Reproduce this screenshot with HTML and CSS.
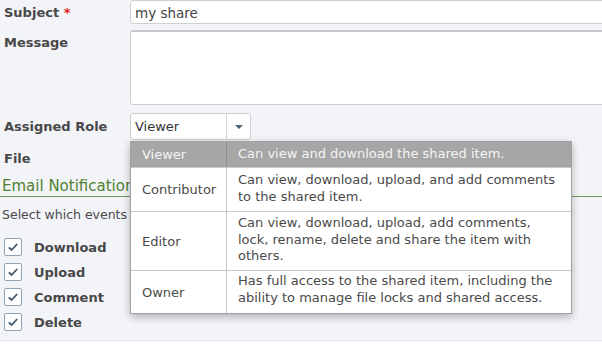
FILE: index.html
```html
<!DOCTYPE html>
<html>
<head>
<meta charset="utf-8">
<link rel="stylesheet" href="styles.css">
</head>
<body>
<div class="page">
  <div class="form">
    <div class="row row-subject">
      <div class="label">Subject <span class="req">*</span></div>
      <div class="input">my share</div>
    </div>
    <div class="row row-message">
      <div class="label">Message</div>
      <div class="textarea"></div>
    </div>
    <div class="row row-role">
      <div class="label">Assigned Role</div>
      <div class="select-wrap">
        <div class="select">
          <span class="select-value">Viewer</span>
          <span class="select-btn"><span class="caret"></span></span>
        </div>
        <div class="popup">
          <div class="prow head">
            <div class="pname">Viewer</div>
            <div class="pdesc">Can view and download the shared item.</div>
          </div>
          <div class="prow r-contrib">
            <div class="pname">Contributor</div>
            <div class="pdesc">Can view, download, upload, and add comments<br>to the shared item.</div>
          </div>
          <div class="prow r-editor">
            <div class="pname">Editor</div>
            <div class="pdesc">Can view, download, upload, add comments,<br>lock, rename, delete and share the item with<br>others.</div>
          </div>
          <div class="prow r-owner">
            <div class="pname">Owner</div>
            <div class="pdesc">Has full access to the shared item, including the<br>ability to manage file locks and shared access.</div>
          </div>
        </div>
      </div>
    </div>
    <div class="row row-file">
      <div class="label">File</div>
    </div>
    <div class="section-title">Email Notification</div>
    <div class="hint">Select which events</div>
    <div class="checks">
      <div class="check"><span class="box"><svg viewBox="0 0 18 18" width="18" height="18"><path d="M4.8 9.3 L7.6 12 L13.2 6" fill="none" stroke="#3d566c" stroke-width="1.8"/></svg></span><span class="clabel">Download</span></div>
      <div class="check"><span class="box"><svg viewBox="0 0 18 18" width="18" height="18"><path d="M4.8 9.3 L7.6 12 L13.2 6" fill="none" stroke="#3d566c" stroke-width="1.8"/></svg></span><span class="clabel">Upload</span></div>
      <div class="check"><span class="box"><svg viewBox="0 0 18 18" width="18" height="18"><path d="M4.8 9.3 L7.6 12 L13.2 6" fill="none" stroke="#3d566c" stroke-width="1.8"/></svg></span><span class="clabel">Comment</span></div>
      <div class="check"><span class="box"><svg viewBox="0 0 18 18" width="18" height="18"><path d="M4.8 9.3 L7.6 12 L13.2 6" fill="none" stroke="#3d566c" stroke-width="1.8"/></svg></span><span class="clabel">Delete</span></div>
    </div>
  </div>
  <div class="footer"></div>
</div>
</body>
</html>
```
FILE: styles.css
```css
html, body {
  margin: 0;
  padding: 0;
  background: #ffffff;
}
body {
  font-family: "DejaVu Sans", Verdana, sans-serif;
  color: #4a4a4a;
  width: 602px;
  height: 357px;
  overflow: hidden;
}
.page {
  display: flex;
  flex-direction: column;
}
.form {
  background: #f3f4f8;
  height: 340px;
  border-bottom: 1px solid #e2e3e8;
  display: flex;
  flex-direction: column;
}
.row {
  display: flex;
  align-items: flex-start;
}
.label {
  width: 126px;
  padding-left: 4px;
  font-weight: bold;
  font-size: 13px;
  color: #484848;
  flex-shrink: 0;
}
.req {
  color: #e02020;
}
.row-subject {
  height: 25px;
}
.row-subject .label {
  padding-top: 5px;
}
.input {
  flex: 1;
  height: 24px;
  margin-right: -10px;
  background: #fff;
  border: 1px solid #cfcfcf;
  border-radius: 3px;
  font-size: 13.5px;
  line-height: 24px;
  padding-left: 4px;
  color: #444;
  box-sizing: border-box;
}
.row-message {
  margin-top: 5px;
  height: 75px;
}
.row-message .label {
  padding-top: 5px;
}
.textarea {
  flex: 1;
  height: 75px;
  margin-right: -10px;
  background: #fff;
  border: 1px solid #cfcfcf;
  border-top: 2px solid #c6c6c6;
  border-radius: 3px;
  box-sizing: border-box;
}
.row-role {
  margin-top: 8px;
  height: 27px;
}
.row-role .label {
  padding-top: 6px;
}
.select-wrap {
  position: relative;
}
.select {
  width: 121px;
  height: 27px;
  display: flex;
  background: #fff;
  border: 1px solid #cfcfcf;
  border-radius: 3px;
  box-sizing: border-box;
}
.select-value {
  width: 91px;
  border-right: 1px solid #d6d6d6;
  font-size: 13px;
  line-height: 25px;
  padding-left: 4px;
  color: #333;
}
.select-btn {
  flex: 1;
  display: flex;
  align-items: center;
  justify-content: center;
}
.caret {
  width: 0;
  height: 0;
  border-left: 4px solid transparent;
  border-right: 4px solid transparent;
  border-top: 4px solid #4b6173;
}
.popup {
  position: absolute;
  left: 0;
  top: 28px;
  width: 440px;
  background: #fff;
  border: 1px solid #a0a0a0;
  box-shadow: 0 3px 8px rgba(0,0,0,0.28);
  font-size: 13px;
  color: #4a4a4a;
  z-index: 5;
}
.prow {
  display: flex;
  border-top: 1px solid #c8c8c8;
}
.prow:first-child {
  border-top: none;
}
.pname {
  width: 84px;
  padding-left: 11px;
  border-right: 1px solid #c8c8c8;
  display: flex;
  align-items: center;
  flex-shrink: 0;
}
.pdesc {
  flex: 1;
  padding: 3px 0 3px 11px;
  line-height: 16.5px;
}
.head {
  background: #a6a6a6;
  color: #f4f4f4;
  height: 25px;
}
.head .pname {
  border-right-color: #8e8e8e;
}
.head .pdesc {
  display: flex;
  align-items: center;
  padding: 0 0 0 11px;
}
.r-contrib { height: 43px; }
.r-contrib .pdesc { padding-top: 4px; }
.r-editor { height: 58px; }
.r-editor .pdesc { padding-top: 3px; }
.r-owner { height: 42px; }
.r-owner .pdesc { padding-top: 2px; }
.row-file {
  margin-top: 11px;
  height: 16px;
}
.section-title {
  margin-top: 10px;
  padding-left: 2px;
  font-size: 15px;
  color: #4f8233;
  height: 19px;
  line-height: 19px;
  border-bottom: 1px solid #6c9a55;
}
.hint {
  margin-top: 10px;
  padding-left: 2px;
  font-size: 12.5px;
  color: #4a4a4a;
}
.checks {
  margin-top: 16px;
  display: flex;
  flex-direction: column;
  gap: 7px;
  padding-left: 4px;
}
.check {
  display: flex;
  align-items: center;
  height: 18px;
}
.box {
  width: 18px;
  height: 18px;
  box-sizing: border-box;
  border: 1px solid #8fa3b3;
  border-radius: 2px;
  background: #fff;
  display: flex;
  align-items: center;
  justify-content: center;
  overflow: hidden;
}
.box svg {
  flex-shrink: 0;
}
.clabel {
  margin-left: 12px;
  font-weight: bold;
  font-size: 13px;
  color: #484848;
}
.footer {
  flex: 1;
  background: #fff;
}
```
